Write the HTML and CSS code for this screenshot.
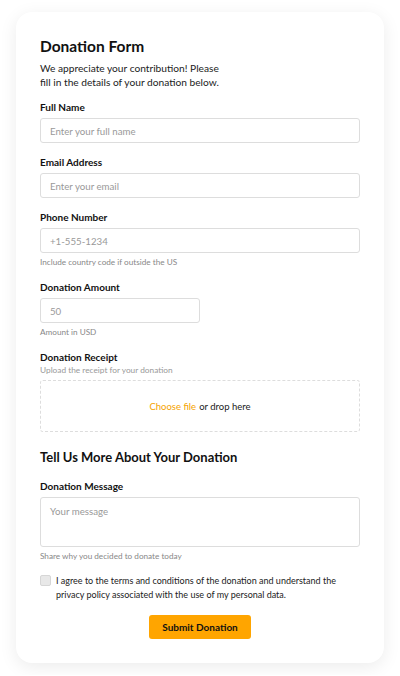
FILE: index.html
```html
<!DOCTYPE html>
<html lang="en">
<head>
    <meta charset="UTF-8">
    <meta name="viewport" content="width=device-width, initial-scale=1.0">
    <title>Donation Form</title>
    <link rel="stylesheet" href="styles.css">
</head>
<body>
    <div class="card">
        <h1 class="title">Donation Form</h1>
        <p class="intro">We appreciate your contribution! Please fill in the details of your donation below.</p>

        <form class="form" id="donation-form">
            <div class="field">
                <label for="full-name">Full Name</label>
                <input type="text" id="full-name" placeholder="Enter your full name">
            </div>

            <div class="field">
                <label for="email">Email Address</label>
                <input type="email" id="email" placeholder="Enter your email">
            </div>

            <div class="field">
                <label for="phone">Phone Number</label>
                <input type="tel" id="phone" placeholder="+1-555-1234">
                <small class="help">Include country code if outside the US</small>
            </div>

            <div class="field">
                <label for="amount">Donation Amount</label>
                <input type="number" id="amount" class="half" placeholder="50">
                <small class="help">Amount in USD</small>
            </div>

            <div class="field">
                <label for="receipt">Donation Receipt</label>
                <small class="sub">Upload the receipt for your donation</small>
                <div class="dropzone">
                    <span class="choose">Choose file</span> or drop here
                </div>
            </div>

            <h2 class="section-title">Tell Us More About Your Donation</h2>

            <div class="field">
                <label for="message">Donation Message</label>
                <textarea id="message" placeholder="Your message"></textarea>
                <small class="help">Share why you decided to donate today</small>
            </div>

            <div class="agree">
                <input type="checkbox" id="agree">
                <label for="agree">I agree to the terms and conditions of the donation and understand the privacy policy associated with the use of my personal data.</label>
            </div>

            <div class="actions">
                <button type="submit">Submit Donation</button>
            </div>
        </form>
    </div>
</body>
</html>
```

FILE: styles.css
```css
/* Base Styling */
body {
    margin: 0;
    background: #fff;
    font-family: 'Lato', sans-serif;
    color: #222;
}

.card {
    margin: 12px 16px;
    padding: 24px;
    background: #fff;
    border-radius: 16px;
    box-shadow: 0 4px 18px rgba(0, 0, 0, 0.08);
}

.title {
    margin: 0;
    font-size: 15.5px;
    line-height: 20px;
    font-weight: 700;
    color: #111;
}

.intro {
    margin: 5px 0 0;
    max-width: 185px;
    font-size: 10.2px;
    line-height: 14px;
    color: #222;
}

.form {
    margin-top: 11px;
}

.field {
    display: flex;
    flex-direction: column;
    margin-bottom: 12px;
}

.field label {
    font-size: 10px;
    line-height: 14px;
    font-weight: 700;
    color: #111;
    margin-bottom: 4px;
}

.field input,
.field textarea {
    box-sizing: border-box;
    width: 100%;
    height: 25px;
    padding: 0 9px;
    border: 1px solid #ddd;
    border-radius: 3px;
    font-family: inherit;
    font-size: 9.7px;
    color: #333;
    background: #fff;
}

.field input::placeholder,
.field textarea::placeholder {
    color: #999;
}

.field .half {
    width: 160px;
}

.field textarea {
    height: 50px;
    padding: 7px 9px;
    resize: none;
}

.help {
    margin-top: 4px;
    font-size: 8.2px;
    line-height: 11px;
    color: #888;
}

.sub {
    margin-top: -3px;
    font-size: 8.3px;
    line-height: 11px;
    color: #999;
}

.dropzone {
    box-sizing: border-box;
    height: 52px;
    margin-top: 4px;
    border: 1px dashed #ddd;
    border-radius: 3px;
    display: flex;
    justify-content: center;
    align-items: center;
    font-size: 9.5px;
    color: #222;
}

.choose {
    color: #f5a300;
    margin-right: 3px;
}

.section-title {
    margin: 17px 0 14px;
    font-size: 13px;
    line-height: 16px;
    font-weight: 700;
    color: #111;
}

.agree {
    display: flex;
    align-items: flex-start;
    gap: 5px;
    margin-top: 11px;
}

.agree input {
    flex: none;
    width: 11px;
    height: 11px;
    margin: 1px 0 0;
    appearance: none;
    background: #e8e8e8;
    border: 1px solid #d6d6d6;
    border-radius: 2px;
}

.agree label {
    font-size: 9px;
    line-height: 14px;
    color: #222;
}

.actions {
    display: flex;
    justify-content: center;
    margin-top: 13px;
}

.actions button {
    width: 102px;
    height: 24px;
    border: none;
    border-radius: 3px;
    background: #ffa500;
    color: #111;
    font-family: inherit;
    font-size: 10px;
    font-weight: 700;
    cursor: pointer;
}
```
